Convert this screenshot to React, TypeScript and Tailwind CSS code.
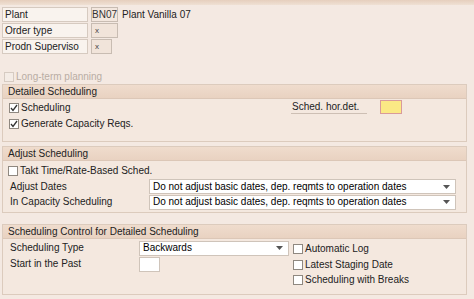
import React from 'react';

const font = { fontFamily: '"Liberation Sans", Arial, sans-serif' };

const Check: React.FC<{ checked?: boolean; disabled?: boolean }> = ({ checked, disabled }) => (
  <span
    className={`inline-flex items-center justify-center w-[10px] h-[10px] border mr-[2px] shrink-0 ${
      disabled ? 'border-[#d6cbc2] bg-[#f4ece6]' : 'border-[#8f8880] bg-white'
    }`}
  >
    {checked && (
      <svg width="8" height="8" viewBox="0 0 8 8">
        <path d="M1 4 L3 6.5 L7 1" fill="none" stroke="#333" strokeWidth="1.3" />
      </svg>
    )}
  </span>
);

const CheckRow: React.FC<{ label: string; checked?: boolean; disabled?: boolean }> = ({ label, checked, disabled }) => (
  <div className={`flex items-center h-[16px] ${disabled ? 'text-[#b9ada4]' : 'text-[#222]'}`}>
    <Check checked={checked} disabled={disabled} />
    <span>{label}</span>
  </div>
);

const Dropdown: React.FC<{ value: string; className: string }> = ({ value, className }) => (
  <div className={`flex items-center h-[15px] bg-white border border-[#cfc4ba] pl-[3px] pr-[5px] ${className}`}>
    <span className="flex-1 truncate">{value}</span>
    <svg width="7" height="4" viewBox="0 0 7 4">
      <path d="M0 0 L7 0 L3.5 4 Z" fill="#555" />
    </svg>
  </div>
);

const Group: React.FC<{ title: string; className: string; children: React.ReactNode }> = ({ title, className, children }) => (
  <div className={`ml-[2px] w-[465px] border border-[#dccbbd] bg-[#f4e8df] ${className}`}>
    <div className="h-[14px] flex items-center pl-[5px] bg-gradient-to-b from-[#efdccd] to-[#e9d2c1] border-b border-[#dcc7b7] text-[#222]">
      {title}
    </div>
    {children}
  </div>
);

const HeadLabel: React.FC<{ label: string }> = ({ label }) => (
  <div className="w-[86px] h-[15px] flex items-center pl-[2px] bg-[#f9f3ee] border border-[#d6cac0] text-[#222]">
    {label}
  </div>
);

export default function App() {
  return (
    <div className="w-[474px] h-[299px] overflow-hidden bg-[#f4e9e2] text-[10px] leading-none" style={font}>
      <div className="h-[5px] bg-gradient-to-b from-[#e6cfbd] to-[#efe0d4]" />
      <div className="pt-[2px] pl-[2px] flex flex-col gap-[1px]">
        <div className="flex items-center gap-[3px]">
          <HeadLabel label="Plant" />
          <div className="w-[27px] h-[15px] flex items-center justify-center border border-[#c8bcb2] bg-[#f3e7de] text-[#333]">BN07</div>
          <span className="text-[#222] ml-[1px]">Plant Vanilla 07</span>
        </div>
        <div className="flex items-center gap-[3px]">
          <HeadLabel label="Order type" />
          <div className="w-[27px] h-[15px] flex items-center pl-[3px] border border-[#c8bcb2] bg-[#f1e4da] text-[8px] text-[#444]">x</div>
        </div>
        <div className="flex items-center gap-[3px]">
          <HeadLabel label="Prodn Superviso" />
          <div className="w-[21px] h-[15px] flex items-center pl-[3px] border border-[#c8bcb2] bg-[#f1e4da] text-[8px] text-[#444]">x</div>
        </div>
      </div>

      <div className="mt-[16px] h-[14px] pl-[4px] flex items-center">
        <CheckRow label="Long-term planning" disabled />
      </div>

      <Group title="Detailed Scheduling" className="h-[58px]">
        <div className="flex">
          <div className="pl-[6px] pt-[1px] w-[288px]">
            <CheckRow label="Scheduling" checked />
            <CheckRow label="Generate Capacity Reqs." checked />
          </div>
          <div className="flex items-start pt-[1px]">
            <div className="w-[76px] h-[14px] flex items-center pl-[1px] border-b border-[#cdbfb4] text-[#222]">Sched. hor.det.</div>
            <div className="ml-[13px] w-[22px] h-[14px] bg-[#fbe985] border border-[#d99a9a]" />
          </div>
        </div>
      </Group>

      <Group title="Adjust Scheduling" className="mt-[4px] h-[67px]">
        <div className="pl-[5px] pt-[2px] pr-[10px] flex flex-col">
          <CheckRow label="Takt Time/Rate-Based Sched." />
          <div className="flex items-center h-[15px]">
            <span className="w-[141px] pl-[2px] text-[#222]">Adjust Dates</span>
            <Dropdown value="Do not adjust basic dates, dep. reqmts to operation dates" className="flex-1" />
          </div>
          <div className="flex items-center h-[16px]">
            <span className="w-[141px] pl-[2px] text-[#222]">In Capacity Scheduling</span>
            <Dropdown value="Do not adjust basic dates, dep. reqmts to operation dates" className="flex-1" />
          </div>
        </div>
      </Group>

      <Group title="Scheduling Control for Detailed Scheduling" className="mt-[11px] h-[71px]">
        <div className="flex pl-[5px] pt-[1px]">
          <div className="flex flex-col">
            <div className="flex items-center h-[16px]">
              <span className="w-[131px] pl-[2px] text-[#222]">Scheduling Type</span>
              <Dropdown value="Backwards" className="w-[150px]" />
            </div>
            <div className="flex items-center h-[16px]">
              <span className="w-[131px] pl-[2px] text-[#222]">Start in the Past</span>
              <div className="w-[21px] h-[15px] bg-white border border-[#cfc4ba]" />
            </div>
          </div>
          <div className="ml-[4px] pt-[1px] flex flex-col">
            <CheckRow label="Automatic Log" />
            <div className="flex flex-col -mt-[0px]">
              <CheckRow label="Latest Staging Date" />
              <div className="-mt-[1px]">
                <CheckRow label="Scheduling with Breaks" />
              </div>
            </div>
          </div>
        </div>
      </Group>
    </div>
  );
}
